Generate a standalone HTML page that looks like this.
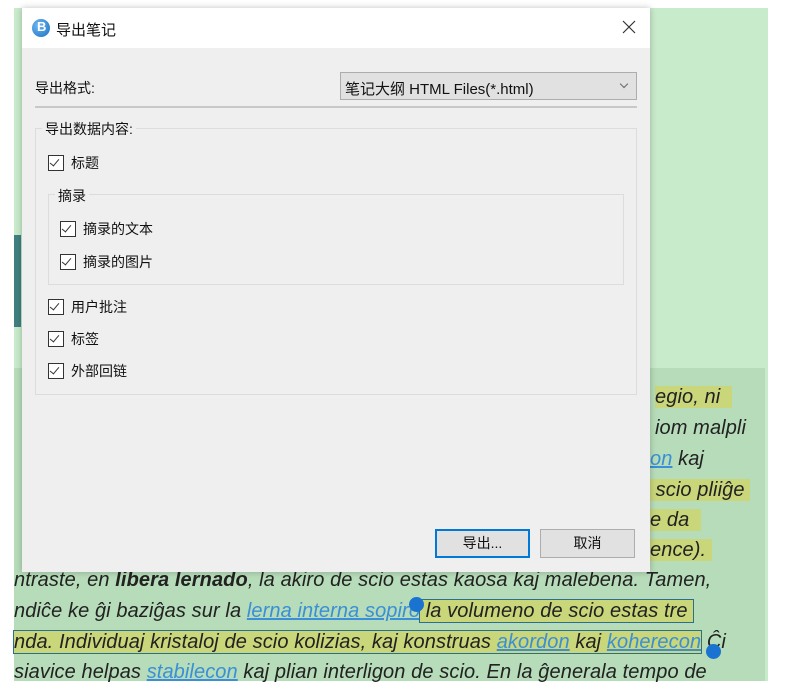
<!DOCTYPE html>
<html><head><meta charset="utf-8"><style>
*{margin:0;padding:0;box-sizing:border-box}
body{width:787px;height:691px;background:#fff;position:relative;overflow:hidden;font-family:"Liberation Sans","Noto Sans CJK SC",sans-serif}
.g1{position:absolute;left:14px;top:8px;width:754px;height:673px;background:#c8ebcb}
.g2{position:absolute;left:14px;top:368px;width:751px;height:313px;background:#b6dcb9}
.teal{position:absolute;left:14px;top:235px;width:7px;height:92px;background:#3f7f80}
.txt{position:absolute;font-style:italic;font-size:20px;color:#222;white-space:nowrap;letter-spacing:0.1px}
.hl{background:#c9d67a}
a{color:#3a8fd6;text-decoration:underline}
.dlg{position:absolute;left:22px;top:8px;width:628px;height:564px;background:#efefef;box-shadow:0 0 6px rgba(0,0,0,.25)}
.tb{height:40px;background:#fff;position:relative}
.tb .ttl{position:absolute;left:34px;top:11px;font-size:15px;color:#111}
.ic{position:absolute;left:10px;top:11px;width:18px;height:18px;border-radius:50%;background:radial-gradient(circle at 35% 35%,#6fb7f0,#1b6fc2)}
.ic:after{content:"B";position:absolute;left:5px;top:0px;color:#fff;font-size:13px;font-weight:bold}
.x{position:absolute;right:14px;top:12px}
.lbl{position:absolute;font-size:14px;color:#111}
.sel{position:absolute;left:318px;top:64px;width:297px;height:28px;background:#e1e1e1;border:1px solid #adadad;font-size:15px;padding:5px 0 0 4px;color:#111}
.sel:after{content:"";position:absolute;right:9px;top:8px;width:5px;height:5px;border-right:1px solid #666;border-bottom:1px solid #666;transform:rotate(45deg)}
.sep{position:absolute;left:13px;top:98px;width:602px;height:2px;background:#c8c8c8}
.grp{position:absolute;border:1px solid #dcdcdc}
.leg{position:absolute;background:#efefef;font-size:14px;color:#111;padding:0 3px}
.cb{position:absolute;font-size:14px;color:#111;padding-left:23px;line-height:16px}
.cb:before{content:"";position:absolute;left:0;top:0;width:14px;height:14px;border:1px solid #333;background:#fff}
.cb:after{content:"";position:absolute;left:4px;top:2px;width:4px;height:8px;border-right:1.5px solid #333;border-bottom:1.5px solid #333;transform:rotate(40deg)}
.btn{position:absolute;top:521px;height:29px;width:95px;background:#e1e1e1;border:1px solid #adadad;font-size:14px;text-align:center;line-height:27px;color:#111}
.dot{position:absolute;width:15px;height:15px;border-radius:50%;background:#1a73d1}
</style></head><body>
<div class="g1"></div><div class="g2"></div><div class="teal"></div>
<div class="txt" style="left:655px;top:386px"><span class="hl">egio, ni&nbsp;&nbsp;</span></div>
<div class="txt" style="left:655px;top:417px">iom malpli</div>
<div class="txt" style="left:650px;top:448px"><a>on</a> kaj</div>
<div class="txt" style="left:650px;top:479px"><span class="hl">&nbsp;scio pliiĝe&nbsp;</span></div>
<div class="txt" style="left:650px;top:509px"><span class="hl">e da&nbsp;&nbsp;</span></div>
<div class="txt" style="left:650px;top:539px"><span class="hl">ence).&nbsp;</span></div>
<div class="txt" style="left:14px;top:569px">ntraste, en <b>libera lernado</b>, la akiro de scio estas kaosa kaj malebena. Tamen,</div>
<div class="txt" style="left:14px;top:600px">ndiĉe ke ĝi baziĝas sur la <a>lerna interna sopiro</a><span class="hl" style="outline:1.5px solid #2a6f8f">&nbsp;la volumeno de scio estas tre&nbsp;</span></div>
<div class="txt" style="left:14px;top:631px"><span class="hl" style="outline:1.5px solid #2a6f8f">nda. Individuaj kristaloj de scio kolizias, kaj konstruas <a>akordon</a> kaj <a>koherecon</a></span> Ĉi</div>
<div class="txt" style="left:14px;top:661px">siavice helpas <a>stabilecon</a> kaj plian interligon de scio. En la ĝenerala tempo de</div>
<div class="dot" style="left:409px;top:597px"></div>
<div class="dot" style="left:706px;top:644px"></div>
<div class="dlg">
 <div class="tb"><div class="ic"></div><div class="ttl">导出笔记</div><svg class="x" width="14" height="14" viewBox="0 0 14 14"><path d="M1 1L13 13M13 1L1 13" stroke="#333" stroke-width="1.2"/></svg></div>
 <div class="lbl" style="left:13px;top:70px">导出格式:</div>
 <div class="sel">笔记大纲 HTML Files(*.html)</div>
 <div class="sep"></div>
 <div class="grp" style="left:13px;top:120px;width:602px;height:267px"></div>
 <div class="leg" style="left:20px;top:111px">导出数据内容:</div>
 <div class="cb" style="left:26px;top:147px">标题</div>
 <div class="grp" style="left:26px;top:186px;width:576px;height:91px"></div>
 <div class="leg" style="left:33px;top:178px">摘录</div>
 <div class="cb" style="left:38px;top:213px">摘录的文本</div>
 <div class="cb" style="left:38px;top:246px">摘录的图片</div>
 <div class="cb" style="left:26px;top:291px">用户批注</div>
 <div class="cb" style="left:26px;top:323px">标签</div>
 <div class="cb" style="left:26px;top:355px">外部回链</div>
 <div class="btn" style="left:413px;border:2px solid #0078d7;line-height:25px">导出...</div>
 <div class="btn" style="left:518px">取消</div>
</div>
</body></html>
